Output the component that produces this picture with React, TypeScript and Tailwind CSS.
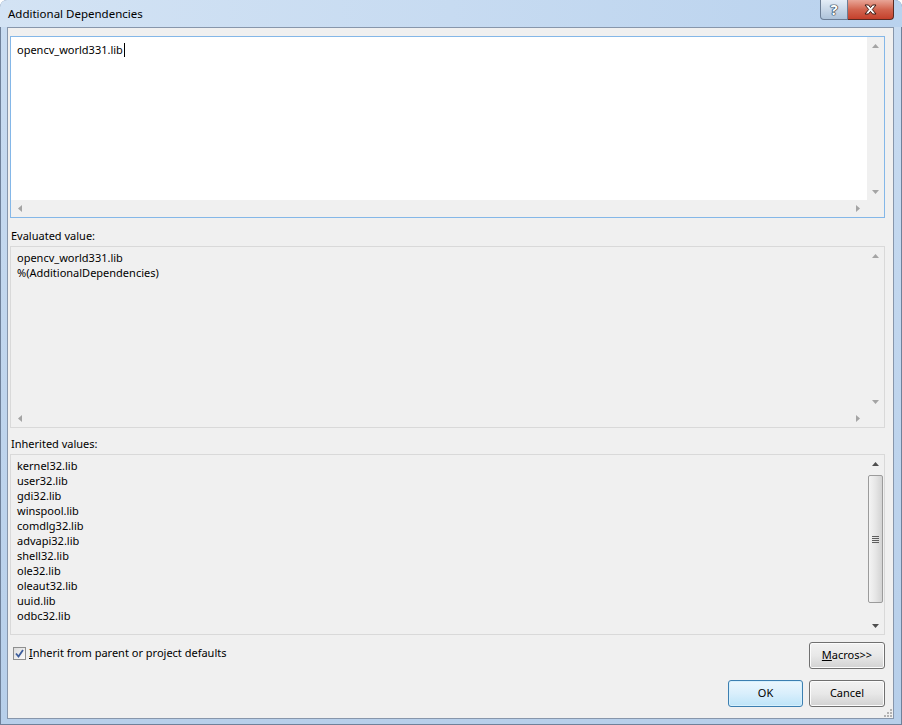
import React from 'react';

type Dir = 'up' | 'down' | 'left' | 'right';

// small scrollbar triangles; enabled ones are darker
const Arrow = ({ dir, active = false }: { dir: Dir; active?: boolean }) => {
  const fill = active ? '#4e4e4e' : '#a4a4a4';
  if (dir === 'up' || dir === 'down') {
    return (
      <svg width="7" height="4" viewBox="0 0 7 4">
        <polygon points={dir === 'up' ? '0,4 3.5,0 7,4' : '0,0 7,0 3.5,4'} fill={fill} />
      </svg>
    );
  }
  return (
    <svg width="4" height="7" viewBox="0 0 4 7">
      <polygon points={dir === 'left' ? '4,0 4,7 0,3.5' : '0,0 0,7 4,3.5'} fill={fill} />
    </svg>
  );
};

const Grip = () => (
  <svg width="7" height="7" viewBox="0 0 7 7">
    <rect x="0" y="0" width="7" height="1" fill="#5e5e5e" />
    <rect x="0" y="2" width="7" height="1" fill="#5e5e5e" />
    <rect x="0" y="4" width="7" height="1" fill="#5e5e5e" />
    <rect x="0" y="6" width="7" height="1" fill="#5e5e5e" />
  </svg>
);

const VScroll = ({ thumb = false }: { thumb?: boolean }) => (
  <div className="flex w-[17px] flex-col bg-[#f0f0f0]">
    <div className="flex h-[17px] items-center justify-center">
      <Arrow dir="up" active={thumb} />
    </div>
    {thumb && (
      <div className="mx-[1px] mt-[3px] flex h-[128px] items-center justify-center rounded-[2px] border border-[#9b9b9b] bg-gradient-to-r from-[#f4f4f4] via-[#e6e6e6] to-[#d3d3d3]">
        <Grip />
      </div>
    )}
    <div className="flex-1" />
    <div className="flex h-[17px] items-center justify-center">
      <Arrow dir="down" active={thumb} />
    </div>
  </div>
);

const HScroll = () => (
  <div className="flex h-[17px]">
    <div className="flex flex-1 items-center justify-between bg-[#f0f0f0] px-[7px]">
      <Arrow dir="left" />
      <Arrow dir="right" />
    </div>
    <div className="w-[17px] bg-[#f0f0f0]" />
  </div>
);

type BoxProps = {
  lines: string[];
  focused?: boolean;
  caret?: boolean;
  hscroll?: boolean;
  thumb?: boolean;
  height: string;
};

const TextBox = ({ lines, focused, caret, hscroll, thumb, height }: BoxProps) => (
  <div
    className={`flex flex-col border ${height} ${
      focused ? 'border-[#84b7e8] bg-white' : 'border-[#d9d9d9] bg-[#f0f0f0]'
    }`}
  >
    <div className="flex min-h-0 flex-1">
      <div className="flex-1 overflow-hidden pl-[6px] pt-[3px] text-[11px] leading-[15px] text-black">
        {lines.map((l, i) => (
          <div key={i} className="whitespace-pre">
            {l}
            {caret && i === lines.length - 1 && (
              <span className="ml-[1px] inline-block h-[14px] w-[1px] translate-y-[3px] bg-black" />
            )}
          </div>
        ))}
      </div>
      <VScroll thumb={thumb} />
    </div>
    {hscroll && <HScroll />}
  </div>
);

const Button = ({ children, primary }: { children: React.ReactNode; primary?: boolean }) => (
  <div
    className={`flex h-[27px] items-center justify-center rounded-[3px] border text-[11px] text-black ${
      primary
        ? 'w-[75px] border-[#3c7fb1] bg-gradient-to-b from-[#ecf7fd] via-[#d9effc] to-[#bde4f8] shadow-[inset_0_0_0_1px_#d6f0fd]'
        : 'w-[76px] border-[#707070] bg-gradient-to-b from-[#f2f2f2] via-[#e8e8e8] to-[#d2d2d2] shadow-[inset_0_0_0_1px_#fcfcfc]'
    }`}
  >
    {children}
  </div>
);

const inherited = [
  'kernel32.lib',
  'user32.lib',
  'gdi32.lib',
  'winspool.lib',
  'comdlg32.lib',
  'advapi32.lib',
  'shell32.lib',
  'ole32.lib',
  'oleaut32.lib',
  'uuid.lib',
  'odbc32.lib',
];

export default function App() {
  return (
    <div className="flex h-[725px] w-[902px] flex-col overflow-hidden rounded-t-[7px] bg-gradient-to-b from-[#c9dcf1] to-[#b7cfea] font-['Noto_Sans','Open_Sans',sans-serif] shadow-[inset_0_0_0_1px_#6f819a]">
      {/* title bar */}
      <div className="flex h-[27px] shrink-0 items-start bg-gradient-to-r from-[#d3e3f4] via-[#c7dbf1] to-[#b9d2ee]">
        <div className="pl-[8px] pt-[6px] text-[11.5px] leading-[16px] text-black">Additional Dependencies</div>
        <div className="flex-1" />
        <div className="mr-[8px] flex">
          <div className="flex h-[20px] w-[28px] items-center justify-center rounded-bl-[4px] border border-t-0 border-[#6c7e96] bg-gradient-to-b from-[#e4edf7] via-[#c8d7e8] to-[#aec3da]">
            <span className="text-[15px] font-bold leading-none text-white [text-shadow:0_0_1px_#1f2f44,0_0_1px_#1f2f44,0_0_1px_#1f2f44,0_0_1px_#1f2f44]">
              ?
            </span>
          </div>
          <div className="flex h-[20px] w-[46px] items-center justify-center rounded-br-[4px] border border-l-0 border-t-0 border-[#5a2a22] bg-gradient-to-b from-[#e8a597] via-[#d2644f] to-[#c4402b]">
            <svg width="13" height="11" viewBox="0 0 13 11">
              <path
                d="M1 1 H4.5 L6.5 3.6 L8.5 1 H12 L8.3 5.5 L12 10 H8.5 L6.5 7.4 L4.5 10 H1 L4.7 5.5 Z"
                fill="#ffffff"
                stroke="#3a1a14"
                strokeWidth="1"
                strokeLinejoin="round"
              />
            </svg>
          </div>
        </div>
      </div>

      {/* client area */}
      <div className="ml-[7px] mr-[8px] flex h-[692px] shrink-0 flex-col border border-[#8796ab] bg-[#f0f0f0] pl-[2px] pr-[8px] pt-[8px]">
        <TextBox lines={['opencv_world331.lib']} focused caret hscroll height="h-[182px]" />

        <div className="h-[28px] pl-[1px] pt-[10px] text-[11px] leading-[15px] text-black">Evaluated value:</div>
        <TextBox lines={['opencv_world331.lib', '%(AdditionalDependencies)']} hscroll height="h-[182px]" />

        <div className="h-[26px] pl-[1px] pt-[8px] text-[11px] leading-[15px] text-black">Inherited values:</div>
        <TextBox lines={inherited} thumb height="h-[181px]" />

        <div className="mt-[7px] flex items-start">
          <div className="ml-[3px] mt-[4px] flex items-center">
            <div className="flex h-[13px] w-[13px] items-center justify-center border border-[#8e8f8f] bg-gradient-to-br from-[#dcdcdc] to-[#fbfbfb]">
              <svg width="9" height="9" viewBox="0 0 9 9">
                <path d="M1 4.5 L3.5 7.5 L8 1" fill="none" stroke="#3c5d9c" strokeWidth="1.8" />
              </svg>
            </div>
            <span className="ml-[3px] -translate-y-[1px] text-[11px] leading-[15px] text-black">
              <span className="underline">I</span>nherit from parent or project defaults
            </span>
          </div>
          <div className="flex-1" />
          <Button>
            <span className="underline">M</span>acros&gt;&gt;
          </Button>
        </div>

        <div className="mt-[11px] flex justify-end gap-[6px]">
          <Button primary>OK</Button>
          <Button>Cancel</Button>
        </div>

        <div className="flex flex-1 items-end justify-end pb-[1px]">
          <svg width="10" height="10" viewBox="0 0 10 10" className="-mr-[7px]">
            {[
              [8, 2],
              [8, 5],
              [5, 5],
              [8, 8],
              [5, 8],
              [2, 8],
            ].map(([x, y], i) => (
              <rect key={i} x={x} y={y} width="2" height="2" fill="#b3b3b3" />
            ))}
          </svg>
        </div>
      </div>
    </div>
  );
}
